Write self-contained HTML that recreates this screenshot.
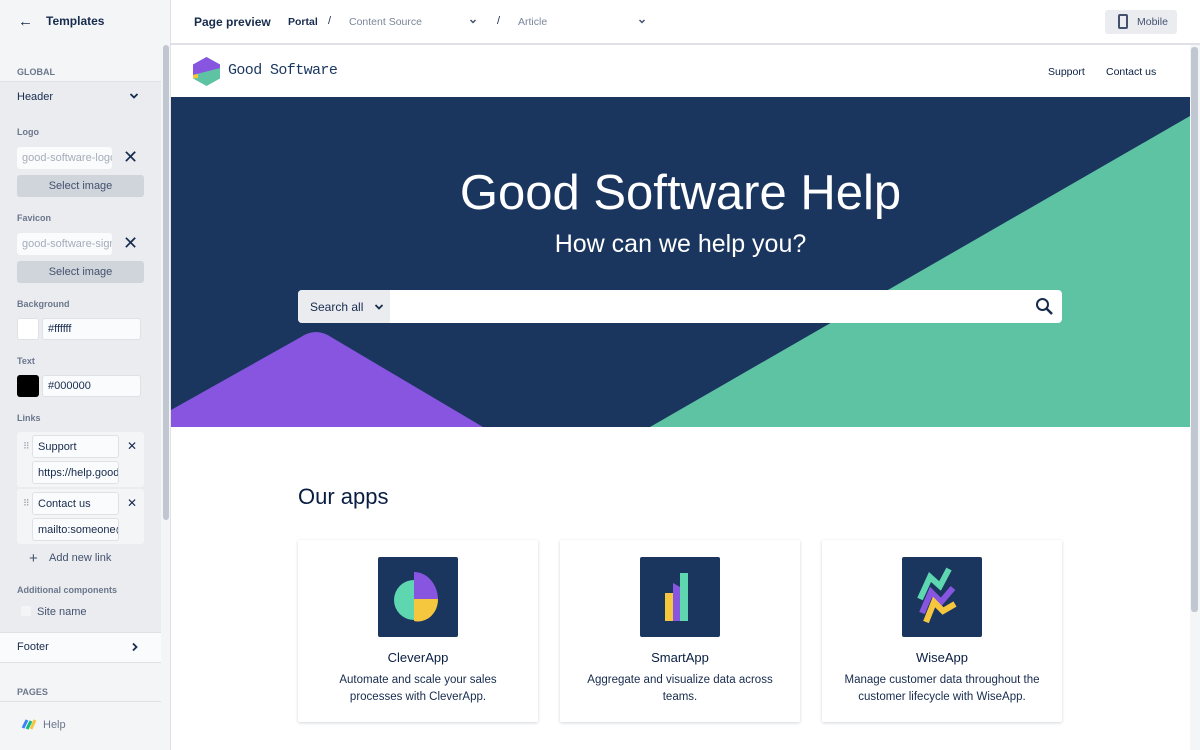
<!DOCTYPE html>
<html><head><style>
*{box-sizing:border-box;margin:0;padding:0}
body{width:1200px;height:750px;overflow:hidden;font-family:"Liberation Sans",sans-serif;background:#fff;position:relative;color:#172b4d}
.abs{position:absolute}
.sb{left:0;top:0;width:171px;height:750px;background:#f4f5f7;border-right:1px solid #dfe1e6}
.lbl{font-size:9px;font-weight:bold;color:#6b778c;left:17px}
.in{background:#fafbfc;border:1px solid #dfe1e6;border-radius:3px;font-size:11px;padding:0 5px;display:flex;align-items:center;overflow:hidden;white-space:nowrap;color:#172b4d}
.btn{background:#d0d4db;border-radius:3px;font-size:11px;color:#42526e;text-align:center;line-height:22px;left:17px;width:127px;height:22px}
.x{font-size:18px;color:#172b4d}
.card{background:#fff;width:240px;height:182px;top:540px;box-shadow:0 1px 3px rgba(9,30,66,.18);border-radius:2px;text-align:center}
.card .ic{width:80px;height:80px;background:#1a365f;border-radius:2px;margin:17px auto 0;position:relative}
.card h3{font-size:13px;font-weight:normal;color:#091e42;margin-top:13px}
.card p{font-size:11.5px;color:#172b4d;line-height:17px;margin-top:7px;padding:0 20px}
</style></head><body>
<div class="abs sb">
 <div class="abs" style="left:18px;top:13px;font-size:15px">←</div>
 <div class="abs" style="left:46px;top:14px;font-size:12px;font-weight:bold">Templates</div>
 <div class="abs lbl" style="top:67px">GLOBAL</div>
 <div class="abs" style="left:0;top:81px;width:161px;height:551px;background:#ebecf0;border-top:1px solid #dfe1e6"></div>
 <div class="abs" style="left:163px;top:45px;width:6px;height:475px;background:#c1c7d0;border-radius:3px"></div>
 <div class="abs" style="left:17px;top:91px;font-size:11px">Header</div>
 <svg class="abs" style="left:129px;top:92px" width="10" height="8"><path d="M1.5 2L5 5.5L8.5 2" stroke="#172b4d" stroke-width="1.8" fill="none"/></svg>
 <div class="abs lbl" style="top:127px">Logo</div>
 <div class="abs in" style="left:17px;top:147px;width:95px;height:22px;color:#a5adba;border:none">good-software-logo</div>
 <div class="abs x" style="left:123px;top:147px">✕</div>
 <div class="abs btn" style="top:175px">Select image</div>
 <div class="abs lbl" style="top:213px">Favicon</div>
 <div class="abs in" style="left:17px;top:233px;width:95px;height:22px;color:#a5adba;border:none">good-software-sign</div>
 <div class="abs x" style="left:123px;top:233px">✕</div>
 <div class="abs btn" style="top:261px">Select image</div>
 <div class="abs lbl" style="top:299px">Background</div>
 <div class="abs" style="left:17px;top:318px;width:22px;height:22px;background:#fff;border:1px solid #dfe1e6;border-radius:3px"></div>
 <div class="abs in" style="left:42px;top:318px;width:99px;height:22px">#ffffff</div>
 <div class="abs lbl" style="top:356px">Text</div>
 <div class="abs" style="left:17px;top:375px;width:22px;height:22px;background:#000;border-radius:3px"></div>
 <div class="abs in" style="left:42px;top:375px;width:99px;height:22px">#000000</div>
 <div class="abs lbl" style="top:413px">Links</div>
 <div class="abs" style="left:17px;top:432px;width:127px;height:55px;background:#f4f5f7;border-radius:3px"></div>
 <div class="abs" style="left:23px;top:441px;font-size:9px;color:#97a0af">⠿</div>
 <div class="abs in" style="left:32px;top:435px;width:87px;height:23px">Support</div>
 <div class="abs" style="left:127px;top:439px;font-size:12px">✕</div>
 <div class="abs in" style="left:32px;top:461px;width:87px;height:23px">https://help.good</div>
 <div class="abs" style="left:17px;top:489px;width:127px;height:55px;background:#f4f5f7;border-radius:3px"></div>
 <div class="abs" style="left:23px;top:498px;font-size:9px;color:#97a0af">⠿</div>
 <div class="abs in" style="left:32px;top:492px;width:87px;height:23px">Contact us</div>
 <div class="abs" style="left:127px;top:496px;font-size:12px">✕</div>
 <div class="abs in" style="left:32px;top:518px;width:87px;height:23px">mailto:someone@</div>
 <div class="abs" style="left:29px;top:550px;font-size:15px;color:#42526e">+</div>
 <div class="abs" style="left:49px;top:552px;font-size:11px;color:#42526e">Add new link</div>
 <div class="abs lbl" style="top:585px">Additional components</div>
 <div class="abs" style="left:21px;top:606px;width:10px;height:10px;background:#f4f5f7;border-radius:2px"></div>
 <div class="abs" style="left:37px;top:606px;font-size:11px;color:#42526e">Site name</div>
 <div class="abs" style="left:0;top:632px;width:161px;height:31px;background:#fafbfc;border-top:1px solid #dfe1e6;border-bottom:1px solid #dfe1e6"></div>
 <div class="abs" style="left:17px;top:641px;font-size:11px">Footer</div>
 <svg class="abs" style="left:131px;top:642px" width="8" height="10"><path d="M2 1.5L5.5 5L2 8.5" stroke="#172b4d" stroke-width="1.8" fill="none"/></svg>
 <div class="abs lbl" style="top:687px">PAGES</div>
 <div class="abs" style="left:0;top:701px;width:161px;height:1px;background:#dfe1e6"></div>
 <svg class="abs" style="left:20px;top:716px" width="18" height="16"><path d="M3 12L7 4" stroke="#3b82f6" stroke-width="3"/><path d="M7 13L11 5" stroke="#10b981" stroke-width="3"/><path d="M11 13L15 4" stroke="#f5c73f" stroke-width="3"/></svg>
 <div class="abs" style="left:43px;top:719px;font-size:11px;color:#6b778c">Help</div>
</div>
<div class="abs" style="left:171px;top:0;width:1029px;height:45px;background:#fff;border-bottom:2px solid #dfe1e6"></div>
<div class="abs" style="left:194px;top:15px;font-size:12px;font-weight:bold">Page preview</div>
<div class="abs" style="left:288px;top:16px;font-size:10.5px;font-weight:bold">Portal</div>
<div class="abs" style="left:328px;top:15px;font-size:11px">/</div>
<div class="abs" style="left:349px;top:16px;font-size:10.5px;color:#7a869a">Content Source</div>
<svg class="abs" style="left:469px;top:18px" width="8" height="7"><path d="M1.5 2L4 4.5L6.5 2" stroke="#42526e" stroke-width="1.5" fill="none"/></svg>
<div class="abs" style="left:497px;top:15px;font-size:11px">/</div>
<div class="abs" style="left:518px;top:16px;font-size:10.5px;color:#7a869a">Article</div>
<svg class="abs" style="left:638px;top:18px" width="8" height="7"><path d="M1.5 2L4 4.5L6.5 2" stroke="#42526e" stroke-width="1.5" fill="none"/></svg>
<div class="abs" style="left:1105px;top:10px;width:72px;height:24px;background:#ebecf0;border-radius:3px"></div>
<div class="abs" style="left:1118px;top:14px;width:10px;height:15px;border:2px solid #42526e;border-radius:2px"></div>
<div class="abs" style="left:1137px;top:16px;font-size:10.5px;color:#42526e">Mobile</div>
<div class="abs" style="left:1190px;top:45px;width:10px;height:705px;background:#f4f5f7"></div>
<div class="abs" style="left:1191px;top:47px;width:7px;height:565px;background:#c1c7d0;border-radius:3px"></div>
<svg class="abs" style="left:193px;top:57px" width="27" height="29" viewBox="0 0 27 29"><path d="M13.5 0L27 7.5V21.5L13.5 29L0 21.5V7.5Z" fill="#5ec3a3"/><path d="M13.5 0L27 7.5V11L0 18V7.5Z" fill="#8855e0"/><path d="M0 18L5 16.7V21L0 21.5Z" fill="#f5c73f"/></svg>
<div class="abs" style="left:228px;top:62px;font-size:15px;letter-spacing:-0.6px;font-family:'Liberation Mono',monospace;color:#1a365f">Good Software</div>
<div class="abs" style="left:1048px;top:66px;font-size:10.5px;color:#091e42">Support</div>
<div class="abs" style="left:1106px;top:66px;font-size:10.5px;color:#091e42">Contact us</div>
<svg class="abs" style="left:171px;top:97px" width="1019" height="330">
<rect width="1019" height="330" fill="#1a365f"/>
<path d="M479 330L1019 19V330Z" fill="#5ec3a3"/>
<path d="M0 313L130 240Q145 230 160 240L312 330H0Z" fill="#8855e0"/>
</svg>
<div class="abs" style="left:171px;top:165px;width:1019px;text-align:center;color:#fff;font-size:49px">Good Software Help</div>
<div class="abs" style="left:171px;top:230px;width:1019px;text-align:center;color:#fff;font-size:25px">How can we help you?</div>
<div class="abs" style="left:298px;top:290px;width:764px;height:33px;background:#fff;border-radius:4px;overflow:hidden">
 <div class="abs" style="left:0;top:0;width:92px;height:33px;background:#ebecf0"></div>
 <div class="abs" style="left:12px;top:10px;font-size:12px">Search all</div>
 <svg class="abs" style="left:76px;top:13px" width="10" height="8"><path d="M1.5 2L5 5.5L8.5 2" stroke="#172b4d" stroke-width="1.8" fill="none"/></svg>
 <svg class="abs" style="left:737px;top:7px" width="19" height="19"><circle cx="7.5" cy="7.5" r="5.5" fill="none" stroke="#172b4d" stroke-width="2"/><path d="M11.5 11.5L17 17" stroke="#172b4d" stroke-width="2.5"/></svg>
</div>
<div class="abs" style="left:298px;top:484px;font-size:22px;color:#091e42">Our apps</div>
<div class="abs card" style="left:298px"><div class="ic"><svg width="80" height="80"><path d="M36 23A20 20 0 0 0 36 63Z" fill="#5ed6b0"/><path d="M36 15A24 28 0 0 1 60 42H36Z" fill="#8855e0"/><path d="M36 42H60A20 22 0 0 1 36 64Z" fill="#f5c73f"/></svg></div><h3>CleverApp</h3><p>Automate and scale your sales processes with CleverApp.</p></div>
<div class="abs card" style="left:560px"><div class="ic"><svg width="80" height="80"><rect x="25" y="36" width="8" height="28" fill="#f5c73f"/><path d="M33 26L40 30V64H33Z" fill="#8855e0"/><rect x="40" y="16" width="8" height="48" fill="#5ed6b0"/></svg></div><h3>SmartApp</h3><p>Aggregate and visualize data across teams.</p></div>
<div class="abs card" style="left:822px"><div class="ic"><svg width="80" height="80" fill="none" stroke-width="6"><path d="M18 42L28 20L38 29L47 12" stroke="#5ed6b0"/><path d="M20 56L29 35L39 45L51 31" stroke="#8855e0"/><path d="M24 65L32 45L41 54L53 47" stroke="#f5c73f"/></svg></div><h3>WiseApp</h3><p>Manage customer data throughout the customer lifecycle with WiseApp.</p></div>
</body></html>
